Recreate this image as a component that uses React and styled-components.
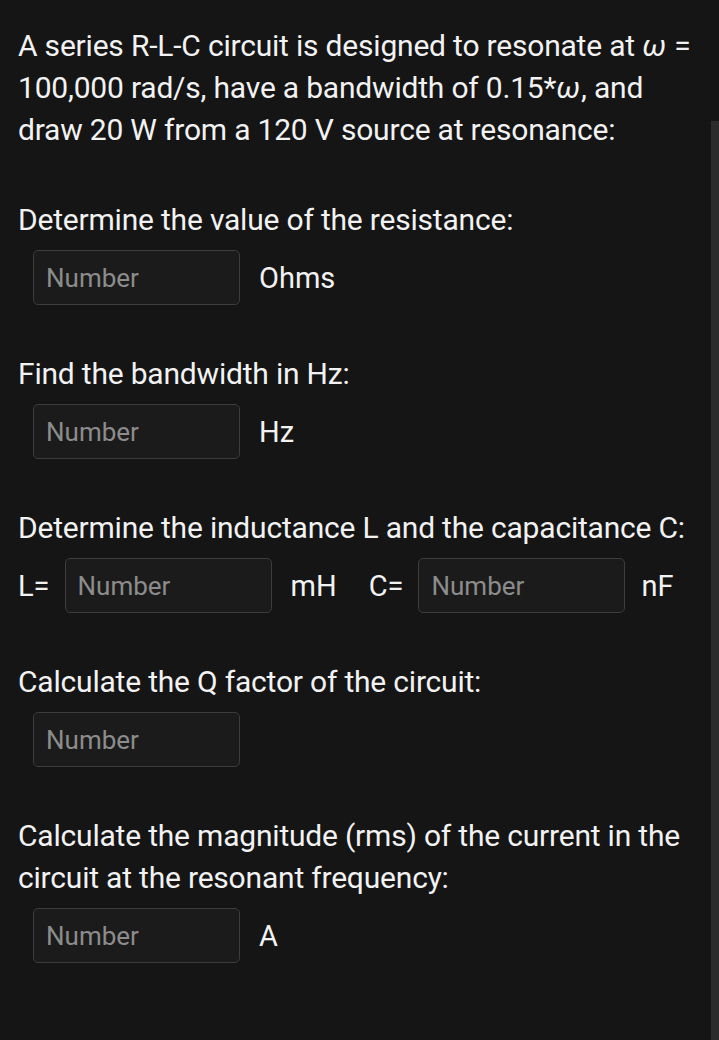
import React from "react";
import styled, { createGlobalStyle } from "styled-components";

const Global = createGlobalStyle`
  html, body { margin: 0; padding: 0; background: #151515; }
  body { font-family: Roboto, "Noto Sans", sans-serif; color: #f2f2f2; }
`;

const Page = styled.div`
  padding: 25px 14px 40px 18px;
  display: flex;
  flex-direction: column;
  gap: 48px;
  min-height: 1040px;
  box-sizing: border-box;
`;

const Para = styled.p`
  margin: 0;
  font-size: 30px;
  line-height: 42px;
  letter-spacing: -0.2px;
`;

const Omega = styled.i`
  font-style: italic;
  padding-right: 1px;
`;

const Section = styled.section`
  display: flex;
  flex-direction: column;
  gap: 9px;
`;

const Row = styled.div`
  display: flex;
  align-items: center;
  padding-left: ${(p) => p.$indent || 0}px;
`;

const Input = styled.input`
  box-sizing: border-box;
  width: 207px;
  height: 55px;
  background: #1b1b1b;
  border: 1.5px solid #3c3c3c;
  border-radius: 5px;
  padding: 0 12px;
  font-family: Roboto, "Noto Sans", sans-serif;
  font-size: 26px;
  color: #eee;
  outline: none;
  &::placeholder { color: #8c8c8c; }
`;

const Unit = styled.span`
  font-size: 29px;
  margin-left: ${(p) => p.$ml ?? 19}px;
  margin-right: ${(p) => p.$mr ?? 0}px;
`;

const Label = styled.span`
  font-size: 29px;
  margin-right: 15px;
`;

const Scroll = styled.div`
  position: fixed;
  right: 0;
  top: 121px;
  bottom: 0;
  width: 8px;
  background: #2b2b2b;
`;

export default function App() {
  return (
    <>
      <Global />
      <Page>
        <Para>
          A series R-L-C circuit is designed to resonate at <Omega>ω</Omega> = 100,000 rad/s, have a bandwidth of 0.15*<Omega>ω</Omega>, and draw 20 W from a 120 V source at resonance:
        </Para>
        <Section>
          <Para>Determine the value of the resistance:</Para>
          <Row $indent={15}>
            <Input placeholder="Number" />
            <Unit>Ohms</Unit>
          </Row>
        </Section>
        <Section>
          <Para>Find the bandwidth in Hz:</Para>
          <Row $indent={15}>
            <Input placeholder="Number" />
            <Unit>Hz</Unit>
          </Row>
        </Section>
        <Section>
          <Para>Determine the inductance L and the capacitance C:</Para>
          <Row>
            <Label>L=</Label>
            <Input placeholder="Number" />
            <Unit $mr={32}>mH</Unit>
            <Label>C=</Label>
            <Input placeholder="Number" />
            <Unit $ml={16}>nF</Unit>
          </Row>
        </Section>
        <Section>
          <Para>Calculate the Q factor of the circuit:</Para>
          <Row $indent={15}>
            <Input placeholder="Number" />
          </Row>
        </Section>
        <Section>
          <Para>Calculate the magnitude (rms) of the current in the circuit at the resonant frequency:</Para>
          <Row $indent={15}>
            <Input placeholder="Number" />
            <Unit>A</Unit>
          </Row>
        </Section>
      </Page>
      <Scroll />
    </>
  );
}
